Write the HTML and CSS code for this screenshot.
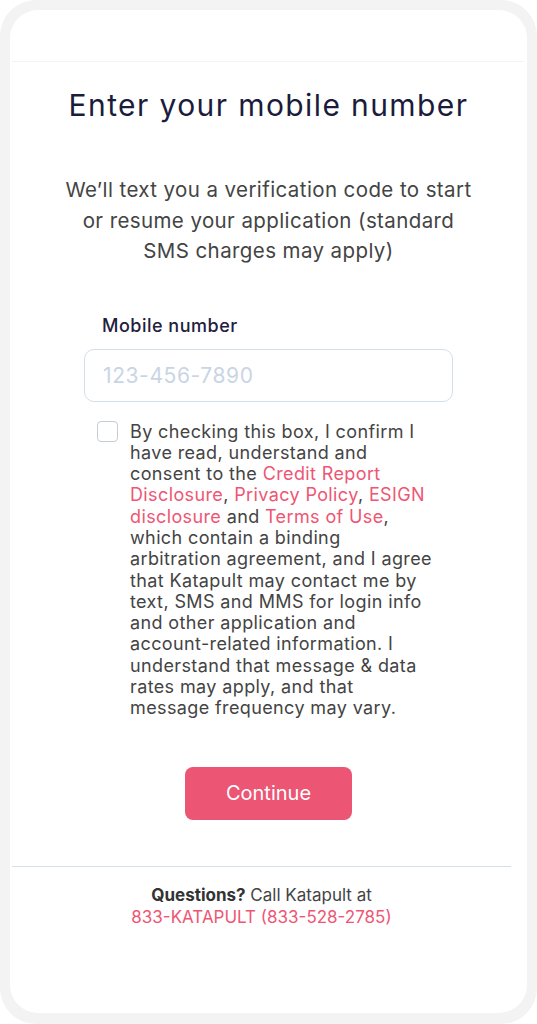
FILE: index.html
```html
<!DOCTYPE html>
<html lang="en">
<head>
  <meta charset="UTF-8">
  <meta name="viewport" content="width=device-width, initial-scale=1.0">
  <title>Enter your mobile number</title>
  <link rel="stylesheet" href="styles.css">
</head>
<body>
  <div class="frame">
    <div class="card">
      <div class="topbar"></div>

      <h1>Enter your mobile number</h1>
      <p class="intro">We’ll text you a verification code to start or resume your application (standard SMS charges may apply)</p>

      <div class="form">
        <label for="phone" class="label">Mobile number</label>
        <input type="tel" id="phone" placeholder="123-456-7890">

        <div class="consent">
          <input type="checkbox" id="agree">
          <label for="agree">By checking this box, I confirm I have read, understand and consent to the <a href="#">Credit Report Disclosure</a>, <a href="#">Privacy Policy</a>, <a href="#">ESIGN disclosure</a> and <a href="#">Terms of Use</a>, which contain a binding arbitration agreement, and I agree that Katapult may contact me by text, SMS and MMS for login info and other application and account-related information. I understand that message &amp; data rates may apply, and that message frequency may vary.</label>
        </div>

        <button class="continue">Continue</button>
      </div>

      <div class="footer">
        <p><b>Questions?</b> Call Katapult at</p>
        <a href="#">833-KATAPULT (833-528-2785)</a>
      </div>
    </div>
  </div>
</body>
</html>
```

FILE: styles.css
```css
* { box-sizing: border-box; margin: 0; padding: 0; }
body {
  font-family: 'Inter', sans-serif;
  background: #fff;
  color: #444;
}
.frame {
  width: 537px;
  height: 1024px;
  background: #f3f3f3;
  border-radius: 36px;
  padding: 10px 10px 11px;
}
.card {
  height: 100%;
  background: #fff;
  border-radius: 28px;
  text-align: center;
  display: flex;
  flex-direction: column;
}
.topbar {
  height: 52px;
  margin: 0 3px 0 2px;
  border-bottom: 1px solid #f3f3f3;
}
h1 {
  margin-top: 23px;
  font-size: 30px;
  line-height: 40px;
  font-weight: 400;
  letter-spacing: 1.4px;
  color: #1b1c3c;
}
.intro {
  margin: 50px auto 0;
  width: 412px;
  font-size: 20.5px;
  line-height: 30.5px;
  letter-spacing: 0.4px;
  color: #444;
}
.form {
  width: 369px;
  margin: 47px auto 0;
  text-align: left;
}
.label {
  display: block;
  padding-left: 18px;
  font-size: 18px;
  line-height: 24px;
  font-weight: 500;
  letter-spacing: 0.5px;
  color: #1f2040;
}
input[type="tel"] {
  display: block;
  width: 100%;
  height: 53px;
  margin-top: 11px;
  padding: 0 18px;
  border: 1.5px solid #d5dfea;
  border-radius: 10px;
  font-family: inherit;
  font-size: 21px;
  letter-spacing: 0.6px;
  color: #333;
}
input[type="tel"]::placeholder { color: #c9d5e5; }
.consent {
  display: flex;
  gap: 12px;
  margin-top: 19px;
  padding-left: 13px;
}
.consent input {
  appearance: none;
  flex: none;
  width: 21px;
  height: 21px;
  border: 1.5px solid #c5ccd6;
  border-radius: 4px;
  background: #fff;
}
.consent label {
  width: 304px;
  font-size: 18px;
  line-height: 21.3px;
  letter-spacing: 0.38px;
  color: #444;
}
a {
  color: #ee5674;
  text-decoration: none;
}
.continue {
  display: block;
  width: 167px;
  height: 53px;
  margin: 48px auto 0;
  border: none;
  border-radius: 8px;
  background: #ec5574;
  color: #fff;
  font-family: inherit;
  font-size: 20px;
  cursor: pointer;
}
.footer {
  margin: 46px 16px 0 2px;
  padding-top: 17px;
  border-top: 1.5px solid #d6e0ea;
  font-size: 17px;
  line-height: 22px;
  color: #444;
}
.footer b { font-weight: 700; color: #333; }
```
